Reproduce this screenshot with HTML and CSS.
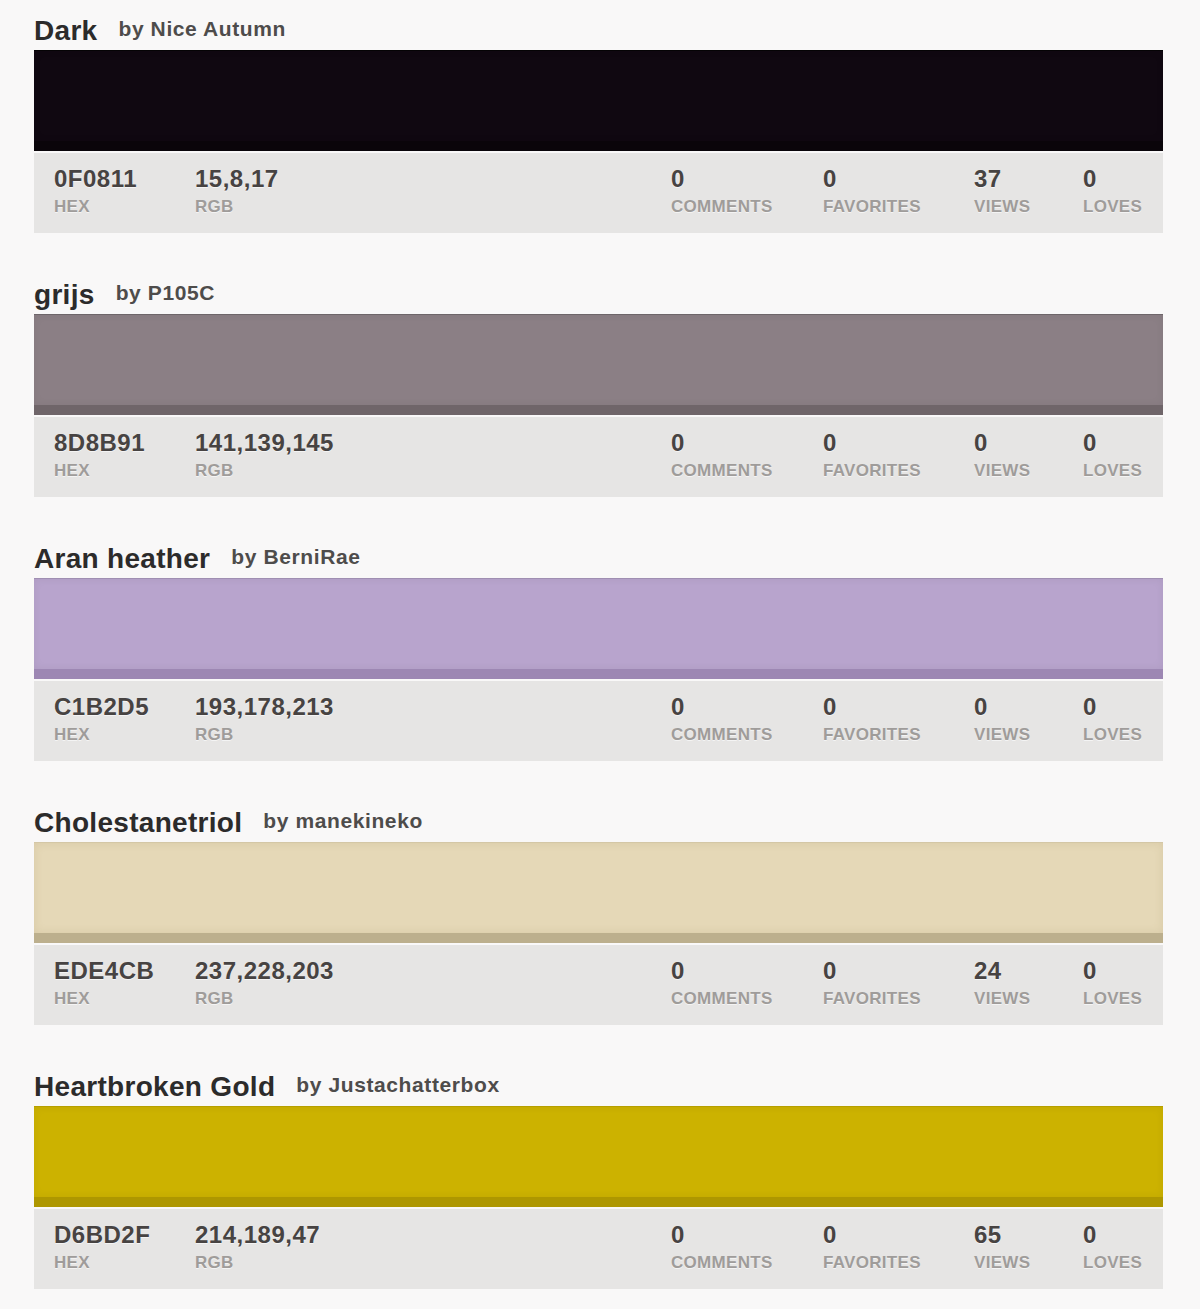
FILE: index.html
```html
<!DOCTYPE html>
<html>
<head>
<meta charset="utf-8">
<link rel="stylesheet" href="styles.css">
</head>
<body>
<main class="list">
  <section class="color">
    <div class="head"><span class="name">Dark</span><span class="by">by Nice Autumn</span></div>
    <div class="swatch sw-dark"></div>
    <div class="stats">
      <div class="stat"><div class="num">0F0811</div><div class="lbl">HEX</div></div>
      <div class="stat"><div class="num">15,8,17</div><div class="lbl">RGB</div></div>
      <div class="stat"><div class="num">0</div><div class="lbl">COMMENTS</div></div>
      <div class="stat"><div class="num">0</div><div class="lbl">FAVORITES</div></div>
      <div class="stat"><div class="num">37</div><div class="lbl">VIEWS</div></div>
      <div class="stat"><div class="num">0</div><div class="lbl">LOVES</div></div>
    </div>
  </section>
  <section class="color">
    <div class="head"><span class="name">grijs</span><span class="by">by P105C</span></div>
    <div class="swatch sw-grijs"></div>
    <div class="stats">
      <div class="stat"><div class="num">8D8B91</div><div class="lbl">HEX</div></div>
      <div class="stat"><div class="num">141,139,145</div><div class="lbl">RGB</div></div>
      <div class="stat"><div class="num">0</div><div class="lbl">COMMENTS</div></div>
      <div class="stat"><div class="num">0</div><div class="lbl">FAVORITES</div></div>
      <div class="stat"><div class="num">0</div><div class="lbl">VIEWS</div></div>
      <div class="stat"><div class="num">0</div><div class="lbl">LOVES</div></div>
    </div>
  </section>
  <section class="color">
    <div class="head"><span class="name">Aran heather</span><span class="by">by BerniRae</span></div>
    <div class="swatch sw-aran"></div>
    <div class="stats">
      <div class="stat"><div class="num">C1B2D5</div><div class="lbl">HEX</div></div>
      <div class="stat"><div class="num">193,178,213</div><div class="lbl">RGB</div></div>
      <div class="stat"><div class="num">0</div><div class="lbl">COMMENTS</div></div>
      <div class="stat"><div class="num">0</div><div class="lbl">FAVORITES</div></div>
      <div class="stat"><div class="num">0</div><div class="lbl">VIEWS</div></div>
      <div class="stat"><div class="num">0</div><div class="lbl">LOVES</div></div>
    </div>
  </section>
  <section class="color">
    <div class="head"><span class="name">Cholestanetriol</span><span class="by">by manekineko</span></div>
    <div class="swatch sw-chol"></div>
    <div class="stats">
      <div class="stat"><div class="num">EDE4CB</div><div class="lbl">HEX</div></div>
      <div class="stat"><div class="num">237,228,203</div><div class="lbl">RGB</div></div>
      <div class="stat"><div class="num">0</div><div class="lbl">COMMENTS</div></div>
      <div class="stat"><div class="num">0</div><div class="lbl">FAVORITES</div></div>
      <div class="stat"><div class="num">24</div><div class="lbl">VIEWS</div></div>
      <div class="stat"><div class="num">0</div><div class="lbl">LOVES</div></div>
    </div>
  </section>
  <section class="color">
    <div class="head"><span class="name">Heartbroken Gold</span><span class="by">by Justachatterbox</span></div>
    <div class="swatch sw-gold"></div>
    <div class="stats">
      <div class="stat"><div class="num">D6BD2F</div><div class="lbl">HEX</div></div>
      <div class="stat"><div class="num">214,189,47</div><div class="lbl">RGB</div></div>
      <div class="stat"><div class="num">0</div><div class="lbl">COMMENTS</div></div>
      <div class="stat"><div class="num">0</div><div class="lbl">FAVORITES</div></div>
      <div class="stat"><div class="num">65</div><div class="lbl">VIEWS</div></div>
      <div class="stat"><div class="num">0</div><div class="lbl">LOVES</div></div>
    </div>
  </section>
</main>
</body>
</html>
```

FILE: styles.css
```css
html, body {
  margin: 0;
  padding: 0;
  background: #f9f8f8;
}
body {
  font-family: "Liberation Sans", Arial, sans-serif;
  font-weight: bold;
}
.list {
  padding: 12px 0 0 34px;
  width: 1129px;
}
.color {
  margin-bottom: 43px;
}
.head {
  display: flex;
  align-items: baseline;
  height: 38px;
  line-height: 38px;
}
.name {
  font-size: 28px;
  color: #2c2b2b;
  letter-spacing: 0.3px;
}
.by {
  font-size: 21px;
  color: #4e4c4b;
  margin-left: 21px;
  letter-spacing: 0.6px;
  position: relative;
  top: -4px;
}
.swatch {
  height: 90px;
  border-top: 1px solid rgba(0,0,0,0.25);
  border-bottom: 10px solid;
  box-shadow: inset 0 0 8px rgba(0,0,0,0.06);
}
.sw-dark  { background: #100811; border-bottom-color: #0a050a; border-top-color: #050305; }
.sw-grijs { background: #8b7f85; border-bottom-color: #6f6569; border-top-color: #6e666a; }
.sw-aran  { background: #b8a4cd; border-bottom-color: #9d87b3; border-top-color: #a08fb2; }
.sw-chol  { background: #e5d8b7; border-bottom-color: #bcaf8d; border-top-color: #d4c7a6; box-shadow: inset 0 0 10px rgba(120,100,50,0.12); }
.sw-gold  { background: #ccb200; border-bottom-color: #ae9700; border-top-color: #b69f00; }
.stats {
  margin-top: 2px;
  height: 80px;
  box-sizing: border-box;
  padding: 13px 0 0 20px;
  background: #e6e5e4;
  display: grid;
  grid-template-columns: 141px 476px 152px 151px 109px auto;
}
.num {
  font-size: 24px;
  line-height: 26px;
  color: #474342;
  letter-spacing: 0.5px;
  text-shadow: 0 1px 0 rgba(255,255,255,0.6);
}
.lbl {
  margin-top: 2px;
  font-size: 17px;
  line-height: 26px;
  color: #9f9c9a;
  letter-spacing: 0.3px;
  text-shadow: 0 1px 0 rgba(255,255,255,0.6);
}
```
